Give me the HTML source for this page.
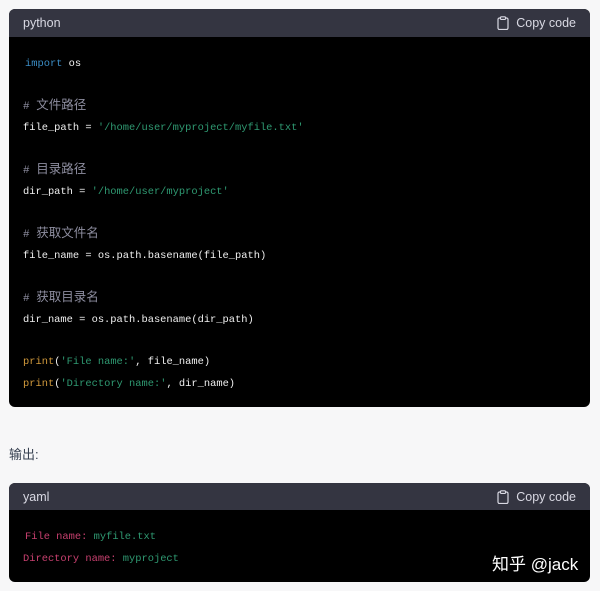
<!DOCTYPE html>
<html><head><meta charset="utf-8"><style>
*{margin:0;padding:0;box-sizing:border-box}
body{width:600px;height:591px;background:#f7f7f8;position:relative;overflow:hidden;font-family:"Liberation Sans","Noto Sans CJK SC",sans-serif}
.box{position:absolute;left:9px;width:581px;background:#000;border-radius:6px;overflow:hidden}
.hd{height:28px;background:#343541;color:#d9d9e3;font-size:12.5px;display:flex;align-items:center;justify-content:space-between;padding:0 14px}
.hd .cp{display:flex;align-items:center;gap:7px}
.code{position:relative;font-family:"Liberation Mono","Noto Sans CJK SC",monospace;font-size:10.4px;color:#f0f0f0}
.l{position:absolute;left:14px;white-space:pre;line-height:14px}
.c{color:#8e8ea0;font-size:11px}
.c span{font-size:12.5px}
.k{color:#3a8cc4}.s{color:#2f9a72}.f{color:#d29a3c}.r{color:#c8406f}
.wm{position:absolute;left:492px;top:550px;color:#fff;font-size:17px;font-family:"Liberation Sans","Noto Sans CJK SC",sans-serif}
</style></head><body>
<div class="box" style="top:9px;height:398px">
<div class="hd"><span>python</span><span class="cp"><svg width="12" height="14" viewBox="0 0 12 14"><rect x="1" y="2" width="10" height="11.5" rx="1.5" fill="none" stroke="#d9d9e3" stroke-width="1.2"/><rect x="3.5" y="0.8" width="5" height="2.6" rx="0.8" fill="#343541" stroke="#d9d9e3" stroke-width="1.1"/></svg>Copy code</span></div>
<div class="code">
<div class="l" style="top:20px;left:16px"><span class="k">import</span> os</div>
<div class="l c" style="top:62px"># <span>文件路径</span></div>
<div class="l" style="top:84px">file_path = <span class="s">'/home/user/myproject/myfile.txt'</span></div>
<div class="l c" style="top:126px"># <span>目录路径</span></div>
<div class="l" style="top:148px">dir_path = <span class="s">'/home/user/myproject'</span></div>
<div class="l c" style="top:190px"># <span>获取文件名</span></div>
<div class="l" style="top:212px">file_name = os.path.basename(file_path)</div>
<div class="l c" style="top:254px"># <span>获取目录名</span></div>
<div class="l" style="top:276px">dir_name = os.path.basename(dir_path)</div>
<div class="l" style="top:318px"><span class="f">print</span>(<span class="s">'File name:'</span>, file_name)</div>
<div class="l" style="top:340px"><span class="f">print</span>(<span class="s">'Directory name:'</span>, dir_name)</div>
</div></div>
<div style="position:absolute;left:9px;top:444px;font-size:13px;color:#374151">输出:</div>
<div class="box" style="top:483px;height:99px">
<div class="hd" style="height:27px"><span>yaml</span><span class="cp"><svg width="12" height="14" viewBox="0 0 12 14"><rect x="1" y="2" width="10" height="11.5" rx="1.5" fill="none" stroke="#d9d9e3" stroke-width="1.2"/><rect x="3.5" y="0.8" width="5" height="2.6" rx="0.8" fill="#343541" stroke="#d9d9e3" stroke-width="1.1"/></svg>Copy code</span></div>
<div class="code">
<div class="l" style="top:20px;left:16px"><span class="r">File name:</span> <span class="s">myfile.txt</span></div>
<div class="l" style="top:42px"><span class="r">Directory name:</span> <span class="s">myproject</span></div>
</div></div>
<div class="wm">知乎 @jack</div>
</body></html>
